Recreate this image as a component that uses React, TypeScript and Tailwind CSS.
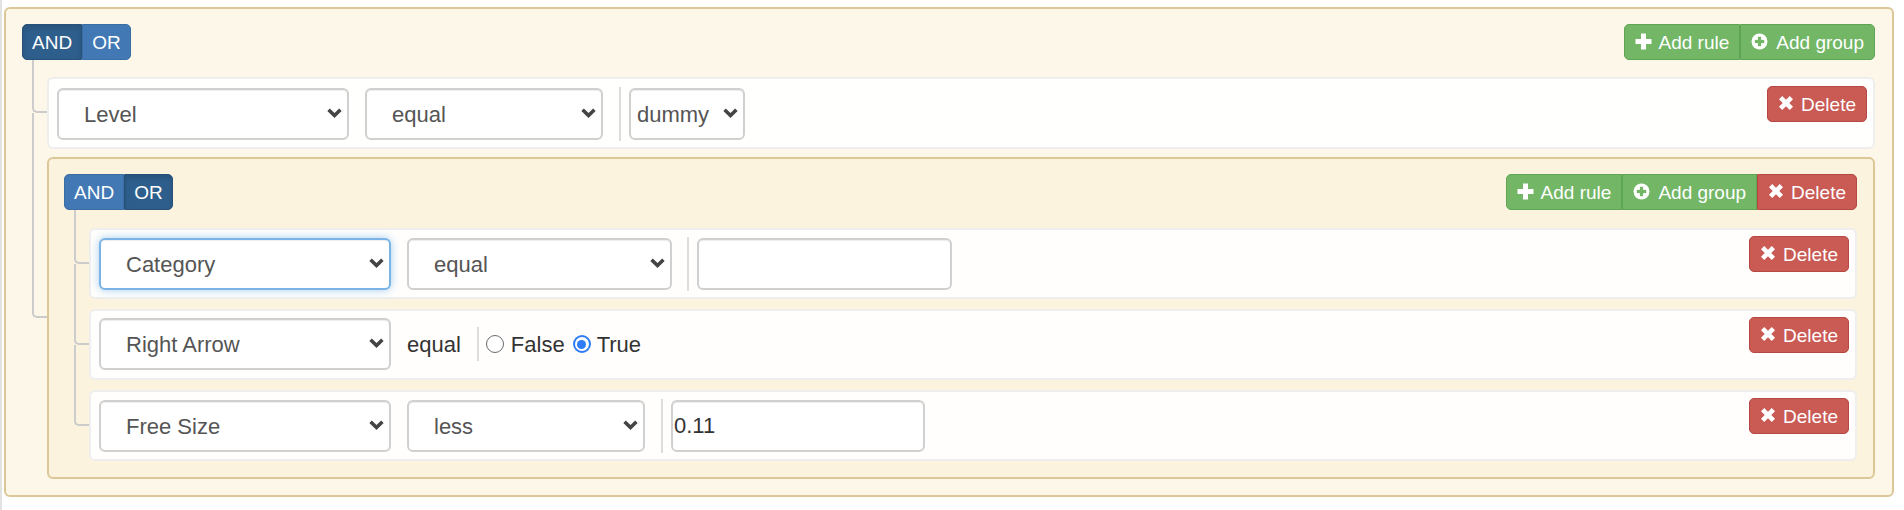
import React from 'react';

const PlusIcon = () => (
  <svg width="17" height="17" viewBox="0 0 17 17" className="-mt-[2px]">
    <rect x="6" y="0.5" width="5" height="16" fill="white" />
    <rect x="0.5" y="6" width="16" height="5" fill="white" />
  </svg>
);

const PlusSignIcon = () => (
  <svg width="17" height="17" viewBox="0 0 17 17" className="-mt-[2px]">
    <circle cx="8.5" cy="8.5" r="8" fill="white" />
    <rect x="6.9" y="3.8" width="3.2" height="9.4" fill="#72b666" />
    <rect x="3.8" y="6.9" width="9.4" height="3.2" fill="#72b666" />
  </svg>
);

const RemoveIcon = () => (
  <svg width="16" height="16" viewBox="0 0 16 16" className="-mt-[3px]">
    <path d="M2.6 2.6 L13.4 13.4 M13.4 2.6 L2.6 13.4" stroke="white" strokeWidth="4.6" fill="none" />
  </svg>
);

const Chevron = () => (
  <svg width="15" height="11" viewBox="0 0 15 11">
    <path d="M1.6 1.8 L7.5 7.6 L13.4 1.8" fill="none" stroke="#444" strokeWidth="3.6" />
  </svg>
);

const btnBase =
  'h-[36px] flex items-center gap-[7px] px-[10px] border text-white text-[19px] leading-none whitespace-nowrap';

function AndOr({ andActive }: { andActive: boolean }) {
  return (
    <div className="flex">
      <button
        className={`h-[36px] px-[9px] border rounded-l-[5px] text-white text-[19px] leading-none ${
          andActive ? 'bg-[#2e5e8c] border-[#27507a] shadow-[inset_0_3px_5px_rgba(0,0,0,0.125)]' : 'bg-[#4279b4] border-[#3a6da3]'
        }`}
      >
        AND
      </button>
      <button
        className={`h-[36px] px-[9px] border rounded-r-[5px] text-white text-[19px] leading-none ${
          andActive ? 'bg-[#4279b4] border-[#3a6da3]' : 'bg-[#2e5e8c] border-[#27507a] shadow-[inset_0_3px_5px_rgba(0,0,0,0.125)]'
        }`}
      >
        OR
      </button>
    </div>
  );
}

function GroupHeader({ andActive, canDelete }: { andActive: boolean; canDelete: boolean }) {
  return (
    <div className="flex items-center justify-between h-[36px]">
      <AndOr andActive={andActive} />
      <div className="flex">
        <button className={`${btnBase} bg-[#72b666] border-[#5ea553] rounded-l-[5px]`}>
          <PlusIcon />
          Add rule
        </button>
        <button
          className={`${btnBase} bg-[#72b666] border-[#5ea553] gap-[8px] ${canDelete ? '' : 'rounded-r-[5px]'}`}
        >
          <PlusSignIcon />
          Add group
        </button>
        {canDelete && (
          <button className={`${btnBase} bg-[#c95a54] border-[#b54842] rounded-r-[5px]`}>
            <RemoveIcon />
            Delete
          </button>
        )}
      </div>
    </div>
  );
}

function Select({
  value,
  className,
  focused,
}: {
  value: string;
  className: string;
  focused?: boolean;
}) {
  return (
    <div className="relative">
      <select
        defaultValue={value}
        className={`appearance-none h-[52px] border-2 rounded-[6px] bg-white text-[22px] text-[#555] outline-none ${
          focused
            ? 'border-[#7ab3e6] shadow-[inset_0_1px_1px_rgba(0,0,0,0.075),0_0_8px_rgba(102,175,233,0.6)]'
            : 'border-[#d0d0d0] shadow-[inset_0_1px_1px_rgba(0,0,0,0.075)]'
        } ${className}`}
      >
        <option value={value}>{value}</option>
      </select>
      <span className="pointer-events-none absolute right-[7px] top-[20px] flex">
        <Chevron />
      </span>
    </div>
  );
}

function TextInput({ value, className }: { value: string; className: string }) {
  return (
    <input
      defaultValue={value}
      className={`h-[52px] border-2 border-[#d0d0d0] rounded-[6px] bg-white px-[1px] text-[22px] text-[#333] outline-none shadow-[inset_0_1px_1px_rgba(0,0,0,0.075)] ${className}`}
    />
  );
}

function DeleteBtn() {
  return (
    <button className={`${btnBase} ml-auto -mt-[1px] bg-[#c95a54] border-[#b54842] rounded-[5px]`}>
      <RemoveIcon />
      Delete
    </button>
  );
}

function Radio({ checked }: { checked?: boolean }) {
  return checked ? (
    <span className="w-[18px] h-[18px] rounded-full border-2 border-[#2f7cf6] bg-white flex items-center justify-center">
      <span className="w-[9px] h-[9px] rounded-full bg-[#2f7cf6]" />
    </span>
  ) : (
    <span className="w-[18px] h-[18px] rounded-full border border-[#6b6b6b] bg-white" />
  );
}

function Rule({ children, tall }: { children: React.ReactNode; tall?: boolean }) {
  return (
    <div
      className={`flex items-start border-2 border-[#eeeeee] rounded-[6px] bg-[rgba(255,255,255,0.9)] pl-[8px] pr-[6px] ${
        tall ? 'h-[72px] pt-[8px]' : 'h-[71px] pt-[7px]'
      }`}
    >
      <div className="flex items-center gap-[16px]">{children}</div>
      <DeleteBtn />
    </div>
  );
}

function ValueBox({ children, className }: { children: React.ReactNode; className: string }) {
  return <div className={`flex items-center border-l-2 border-[#dddddd] ${className}`}>{children}</div>;
}

function TreeItem({
  children,
  gap,
  last,
}: {
  children: React.ReactNode;
  gap: 'first-outer' | 'first-nested' | 'outer' | 'nested';
  last?: boolean;
}) {
  const before =
    gap === 'first-outer'
      ? '-top-[17px] h-[calc(50%+17px)]'
      : gap === 'first-nested'
      ? '-top-[18px] h-[calc(50%+18px)]'
      : gap === 'outer'
      ? '-top-[8px] h-[calc(50%+8px)]'
      : '-top-[10px] h-[calc(50%+10px)]';
  return (
    <div className="relative">
      <div
        className={`absolute -left-[15px] w-[15px] border-l-2 border-b-2 border-[#cccccc] rounded-bl-[5px] ${before}`}
      />
      {!last && <div className="absolute -left-[15px] top-1/2 h-1/2 border-l-2 border-[#cccccc]" />}
      {children}
    </div>
  );
}

export default function App() {
  return (
    <div className="h-[510px] w-[1904px] bg-white border-l-2 border-[#e2e2e2] pl-[2px] pt-[7px] font-['Liberation_Sans',Arial,sans-serif]">
      {/* Root group */}
      <div className="w-[1890px] border-2 border-[#dcc896] rounded-[6px] bg-[rgba(250,240,210,0.5)] pt-[15px] pl-[16px] pr-[17px] pb-[16px]">
        <GroupHeader andActive canDelete={false} />

        <div className="ml-[25px] mt-[17px] flex flex-col gap-[8px]">
          <TreeItem gap="first-outer">
            <Rule tall>
              <Select value="Level" className="w-[292px] pl-[25px]" />
              <Select value="equal" className="w-[238px] pl-[25px]" />
              <ValueBox className="h-[54px] pl-[8px]">
                <Select value="dummy" className="w-[116px] pl-[6px]" />
              </ValueBox>
            </Rule>
          </TreeItem>

          <TreeItem gap="outer" last>
            {/* Nested group */}
            <div className="border-2 border-[#dcc896] rounded-[6px] bg-[rgba(250,240,210,0.5)] pt-[15px] pl-[15px] pr-[16px] pb-[16px]">
              <GroupHeader andActive={false} canDelete />

              <div className="ml-[25px] mt-[18px] flex flex-col gap-[10px]">
                <TreeItem gap="first-nested">
                  <Rule>
                    <Select value="Category" className="w-[292px] pl-[25px]" focused />
                    <Select value="equal" className="w-[265px] pl-[25px]" />
                    <ValueBox className="h-[54px] pl-[8px] -ml-[1px]">
                      <TextInput value="" className="w-[255px]" />
                    </ValueBox>
                  </Rule>
                </TreeItem>

                <TreeItem gap="nested">
                  <Rule>
                    <Select value="Right Arrow" className="w-[292px] pl-[25px]" />
                    <span className="text-[22px] text-[#333]">equal</span>
                    <ValueBox className="h-[34px] pl-[7px] gap-[8px] text-[22px] text-[#333]">
                      <Radio />
                      <span className="-ml-[1px]">False</span>
                      <Radio checked />
                      <span className="-ml-[2px]">True</span>
                    </ValueBox>
                  </Rule>
                </TreeItem>

                <TreeItem gap="nested" last>
                  <Rule>
                    <Select value="Free Size" className="w-[292px] pl-[25px]" />
                    <Select value="less" className="w-[238px] pl-[25px]" />
                    <ValueBox className="h-[54px] pl-[8px]">
                      <TextInput value="0.11" className="w-[254px]" />
                    </ValueBox>
                  </Rule>
                </TreeItem>
              </div>
            </div>
          </TreeItem>
        </div>
      </div>
    </div>
  );
}
